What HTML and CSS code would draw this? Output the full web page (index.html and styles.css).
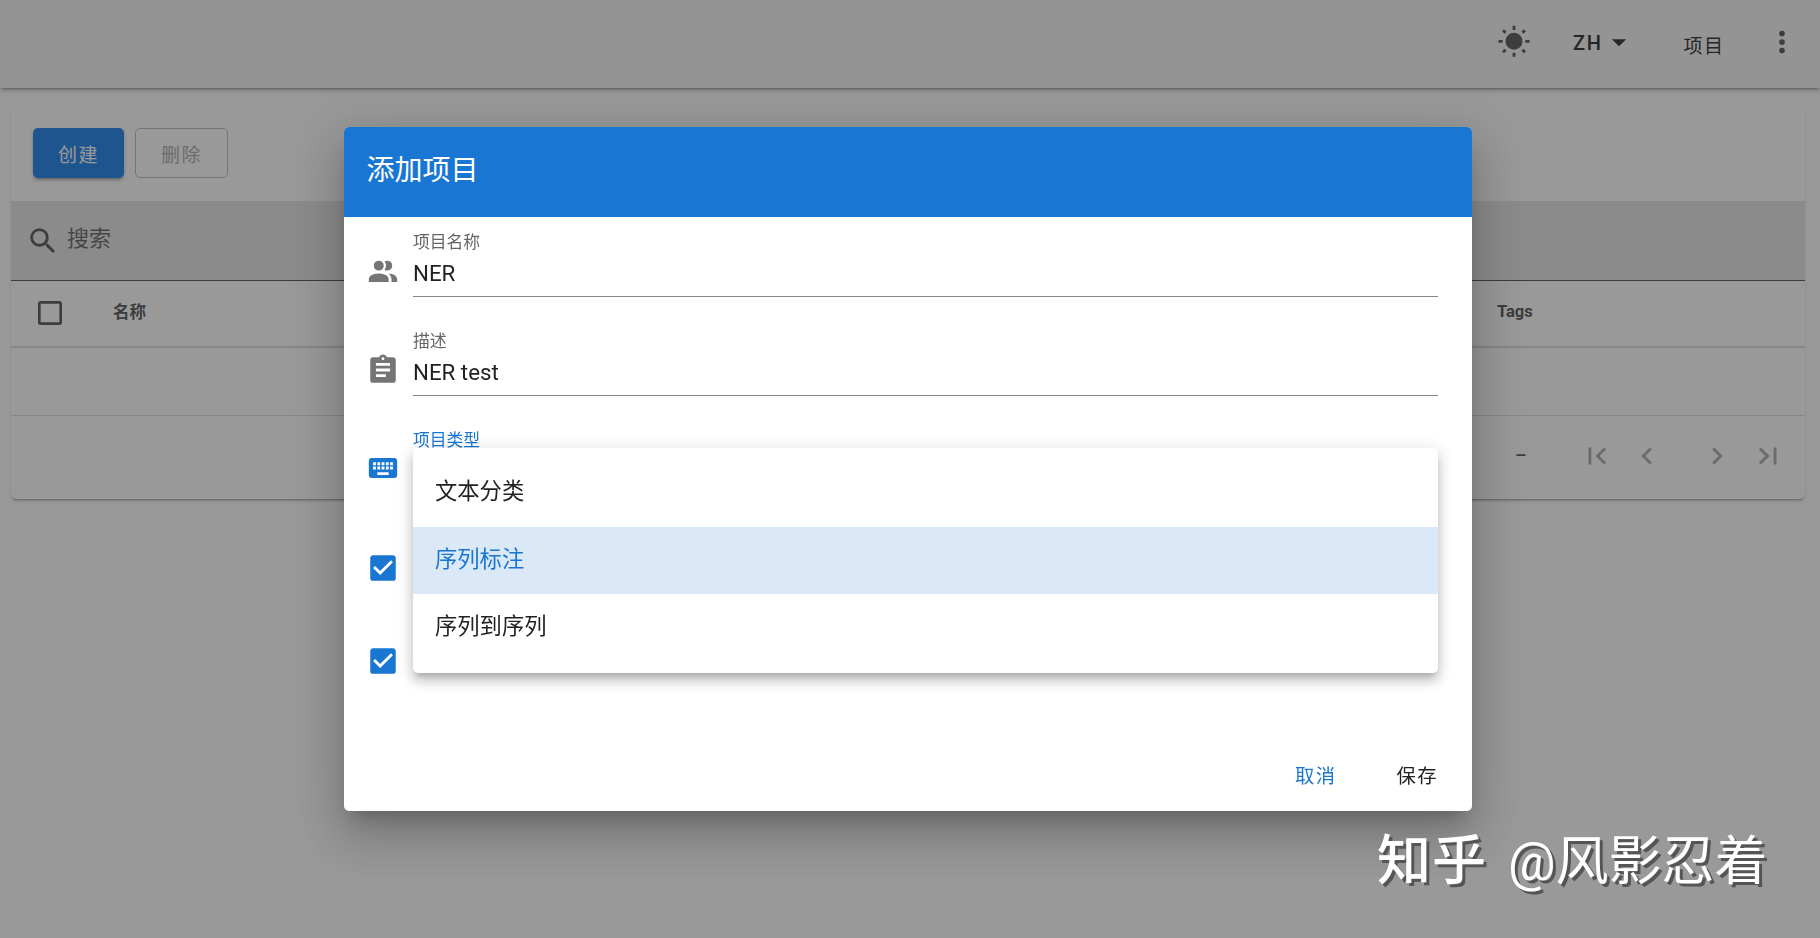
FILE: index.html
```html
<!DOCTYPE html>
<html lang="zh">
<head>
<meta charset="utf-8">
<title>项目</title>
<link rel="stylesheet" href="styles.css">
</head>
<body>
<div class="app">
  <header class="appbar">
    <svg class="icon sun" viewBox="0 0 24 24"><path d="M3.55,18.54L4.96,19.95L6.76,18.16L5.34,16.74M11,22.45C11.32,22.45 13,22.45 13,22.45V19.5H11M12,5.5A6,6 0 0,0 6,11.5A6,6 0 0,0 12,17.5A6,6 0 0,0 18,11.5C18,8.18 15.31,5.5 12,5.5M20,12.5H23V10.5H20M17.24,18.16L19.04,19.95L20.45,18.54L18.66,16.74M20.45,4.46L19.04,3.05L17.24,4.84L18.66,6.26M13,0.55H11V3.5H13M4,10.5H1V12.5H4M6.76,4.84L4.96,3.05L3.55,4.46L5.34,6.26L6.76,4.84Z"/></svg>
    <span class="lang">ZH</span>
    <svg class="icon caret" viewBox="0 0 24 24"><path d="M7,10L12,15L17,10H7Z"/></svg>
    <span class="nav-link">项目</span>
    <svg class="icon dots" viewBox="0 0 24 24"><path d="M12,16A2,2 0 0,1 14,18A2,2 0 0,1 12,20A2,2 0 0,1 10,18A2,2 0 0,1 12,16M12,10A2,2 0 0,1 14,12A2,2 0 0,1 12,14A2,2 0 0,1 10,12A2,2 0 0,1 12,10M12,4A2,2 0 0,1 14,6A2,2 0 0,1 12,8A2,2 0 0,1 10,6A2,2 0 0,1 12,4Z"/></svg>
  </header>
  <main class="main">
    <section class="card">
      <div class="toolbar">
        <button class="btn btn-primary">创建</button>
        <button class="btn btn-outline">删除</button>
      </div>
      <div class="search">
        <svg class="icon search-icon" viewBox="0 0 24 24"><path d="M9.5,3A6.5,6.5 0 0,1 16,9.5C16,11.11 15.41,12.59 14.44,13.73L14.71,14H15.5L20.5,19L19,20.5L14,15.5V14.71L13.73,14.44C12.59,15.41 11.11,16 9.5,16A6.5,6.5 0 0,1 3,9.5A6.5,6.5 0 0,1 9.5,3M9.5,5C7,5 5,7 5,9.5C5,12 7,14 9.5,14C12,14 14,12 14,9.5C14,7 12,5 9.5,5Z"/></svg>
        <span class="search-text">搜索</span>
      </div>
      <div class="thead">
        <svg class="icon head-check" viewBox="0 0 24 24"><path d="M19,3H5C3.89,3 3,3.89 3,5V19A2,2 0 0,0 5,21H19A2,2 0 0,0 21,19V5C21,3.89 20.1,3 19,3M19,5V19H5V5H19Z"/></svg>
        <span class="th th-name">名称</span>
        <span class="th th-tags">Tags</span>
      </div>
      <div class="empty-row"></div>
      <div class="pager">
        <span class="pager-range">–</span>
        <svg class="icon pager-icon first" viewBox="0 0 24 24"><path d="M18.41,16.59L13.82,12L18.41,7.41L17,6L11,12L17,18L18.41,16.59M6,6H8V18H6V6Z"/></svg>
        <svg class="icon pager-icon prev" viewBox="0 0 24 24"><path d="M15.41,16.58L10.83,12L15.41,7.41L14,6L8,12L14,18L15.41,16.58Z"/></svg>
        <svg class="icon pager-icon next" viewBox="0 0 24 24"><path d="M8.59,16.58L13.17,12L8.59,7.41L10,6L16,12L10,18L8.59,16.58Z"/></svg>
        <svg class="icon pager-icon last" viewBox="0 0 24 24"><path d="M5.59,7.41L10.18,12L5.59,16.59L7,18L13,12L7,6L5.59,7.41M16,6H18V18H16V6Z"/></svg>
      </div>
    </section>
  </main>
</div>

<div class="overlay">
  <div class="dialog">
    <div class="dialog-title">添加项目</div>
    <div class="dialog-body">
      <div class="field">
        <svg class="icon field-icon" viewBox="0 0 24 24"><path d="M16 17v2H2v-2s0-4 7-4 7 4 7 4m-3.5-9.5A3.5 3.5 0 1 0 9 11a3.5 3.5 0 0 0 3.5-3.5m3.44 5.5A5.32 5.32 0 0 1 18 17v2h4v-2s0-3.63-6.06-4M15 4a3.39 3.39 0 0 0-1.93.59 5 5 0 0 1 0 5.82A3.39 3.39 0 0 0 15 11a3.5 3.5 0 0 0 0-7z"/></svg>
        <div class="field-main">
          <div class="field-label">项目名称</div>
          <div class="field-value">NER</div>
        </div>
      </div>
      <div class="field">
        <svg class="icon field-icon clip" viewBox="0 0 24 24"><path d="M17,9H7V7H17M17,13H7V11H17M14,17H7V15H14M12,3A1,1 0 0,1 13,4A1,1 0 0,1 12,5A1,1 0 0,1 11,4A1,1 0 0,1 12,3M19,3H14.82C14.4,1.84 13.3,1 12,1C10.7,1 9.6,1.84 9.18,3H5A2,2 0 0,0 3,5V19A2,2 0 0,0 5,21H19A2,2 0 0,0 21,19V5C21,3.89 20.1,3 19,3Z"/></svg>
        <div class="field-main">
          <div class="field-label">描述</div>
          <div class="field-value">NER test</div>
        </div>
      </div>
      <div class="field field-select">
        <svg class="icon field-icon blue" viewBox="0 0 24 24"><path d="M19,10H17V8H19M19,13H17V11H19M16,10H14V8H16M16,13H14V11H16M16,17H8V15H16M7,10H5V8H7M7,13H5V11H7M8,11H10V13H8M8,8H10V10H8M11,11H13V13H11M11,8H13V10H11M20,5H4C2.89,5 2,5.89 2,7V17A2,2 0 0,0 4,19H20A2,2 0 0,0 22,17V7C22,5.89 21.1,5 20,5Z"/></svg>
        <div class="field-main">
          <div class="field-label blue-text">项目类型</div>
        </div>
      </div>
      <div class="checks">
        <svg class="icon check blue" viewBox="0 0 24 24"><path d="M10,17L5,12L6.41,10.58L10,14.17L17.59,6.58L19,8M19,3H5C3.89,3 3,3.89 3,5V19A2,2 0 0,0 5,21H19A2,2 0 0,0 21,19V5C21,3.89 20.1,3 19,3Z"/></svg>
        <svg class="icon check blue" viewBox="0 0 24 24"><path d="M10,17L5,12L6.41,10.58L10,14.17L17.59,6.58L19,8M19,3H5C3.89,3 3,3.89 3,5V19A2,2 0 0,0 5,21H19A2,2 0 0,0 21,19V5C21,3.89 20.1,3 19,3Z"/></svg>
      </div>
    </div>
    <div class="dialog-actions">
      <span class="action blue-text">取消</span>
      <span class="action">保存</span>
    </div>
    <ul class="menu">
      <li class="menu-item">文本分类</li>
      <li class="menu-item selected">序列标注</li>
      <li class="menu-item">序列到序列</li>
    </ul>
  </div>
  <div class="watermark"><span class="wm-brand">知乎</span><span class="wm-name">@风影忍着</span></div>
</div>
</body>
</html>
```
FILE: styles.css
```css
* { box-sizing: border-box; }
html, body { margin: 0; height: 100%; overflow: hidden; }
body {
  background: #fff;
  color: #222;
  font-family: Roboto, "Noto Sans CJK SC", sans-serif;
  width: 1820px;
  height: 938px;
}
.icon { display: block; fill: currentColor; flex: none; }

.appbar {
  height: 88px;
  background: #f5f5f5;
  box-shadow: 0 3px 2px -2px rgba(0,0,0,.3), 0 3px 5px rgba(0,0,0,.2);
  display: flex;
  align-items: center;
  color: #2b2b2b;
  padding-left: 1497px;
}
.sun { width: 34px; height: 34px; color: #555; margin-top: -4px; }
.lang { margin-left: 42px; font-size: 20px; font-weight: 500; letter-spacing: 1.6px; margin-top: -2px; }
.caret { width: 34px; height: 34px; margin-left: 0; margin-top: -4px; }
.nav-link { margin-left: 47px; font-size: 19px; letter-spacing: 1.6px; }
.dots { width: 34px; height: 34px; color: #555; margin-left: 40px; margin-top: -4px; }

.main { padding: 18px 15px 0 11px; }
.card {
  background: #fff;
  border-radius: 5px;
  box-shadow: 0 3px 2px -2px rgba(0,0,0,.3), 0 2px 3px rgba(0,0,0,.15);
  height: 393px;
}
.toolbar { height: 95px; padding: 22px 0 0 22px; display: flex; gap: 11px; align-items: flex-start; }
.btn {
  height: 50px;
  border-radius: 5px;
  font: 400 19px Roboto, "Noto Sans CJK SC", sans-serif;
  letter-spacing: 1.5px;
  padding: 0;
}
.btn-primary {
  width: 91px;
  background: #1e82ec;
  color: #fff;
  border: 0;
  box-shadow: 0 3px 3px -2px rgba(0,0,0,.3), 0 2px 4px rgba(0,0,0,.2);
}
.btn-outline { width: 93px; background: none; border: 1px solid #bbb; color: #aaa; }
.search {
  height: 80px;
  background: #e6e6e6;
  border-bottom: 1px solid #555;
  display: flex;
  align-items: center;
  padding-left: 15px;
  color: #555;
}
.search-icon { width: 34px; height: 34px; }
.search-text { margin-left: 7px; font-size: 22px; margin-top: -9px; color: #666; }
.thead {
  height: 67px;
  border-bottom: 2px solid #ddd;
  display: flex;
  align-items: center;
  padding-left: 23px;
  padding-bottom: 2px;
  color: #555;
}
.head-check { width: 32px; height: 32px; color: #555; }
.th { font-size: 16.5px; font-weight: 700; margin-top: -3px; }
.th-name { margin-left: 47px; }
.th-tags { margin-left: 1351px; }
.empty-row { height: 68px; border-bottom: 1px solid #ddd; }
.pager { height: 81px; display: flex; align-items: center; color: #aaa; padding-left: 1504px; padding-bottom: 2px; }
.pager-range { color: #555; width: 18px; font-size: 18px; font-weight: 500; }
.pager-icon { width: 34px; height: 34px; }
.first { margin-left: 47px; }
.prev { margin-left: 16px; }
.next { margin-left: 36px; }
.last { margin-left: 17px; }

.overlay {
  position: fixed;
  inset: 0;
  background: rgba(33,33,33,.46);
  padding: 127px 0 0 344px;
}
.dialog {
  position: relative;
  width: 1128px;
  height: 684px;
  background: #fff;
  border-radius: 5px;
  display: flex;
  flex-direction: column;
  box-shadow: 0 13px 17px -8px rgba(0,0,0,.2), 0 28px 44px 3px rgba(0,0,0,.14), 0 10px 53px 9px rgba(0,0,0,.12);
}
.dialog-title {
  height: 90px;
  background: #1976d2;
  color: #fff;
  font-size: 28px;
  line-height: 88px;
  padding-left: 22.5px;
  border-radius: 5px 5px 0 0;
  flex: none;
}
.dialog-body { padding: 15px 34px 0 22px; flex: none; }
.field { display: flex; height: 99px; }
.field-icon { width: 34px; height: 34px; color: #757575; margin-top: 23px; margin-right: 13px; }
.field-icon.clip { margin-top: 22px; }
.field-icon.blue { color: #1976d2; margin-top: 21px; }
.field-main { flex: 1; }
.field-label { font-size: 16.8px; line-height: 20px; height: 21px; color: #666; }
.field-value {
  font-size: 22.3px;
  line-height: 40px;
  height: 44px;
  border-bottom: 1px solid #888;
  color: #222;
}
.blue-text { color: #1976d2; }
.blue { color: #1976d2; }
.checks { display: flex; flex-direction: column; gap: 59px; padding-top: 22px; }
.check { width: 34px; height: 34px; }
.dialog-actions {
  margin-top: auto;
  height: 72px;
  flex: none;
  display: flex;
  justify-content: flex-end;
  align-items: center;
  gap: 60px;
  padding-right: 34px;
}
.action { font-size: 19.3px; letter-spacing: 1.5px; }

.menu {
  position: absolute;
  left: 69px;
  top: 321px;
  width: 1025px;
  height: 225px;
  margin: 0;
  padding: 11px 0;
  list-style: none;
  background: #fff;
  border-radius: 5px;
  box-shadow: 0 6px 6px -4px rgba(0,0,0,.2), 0 9px 12px 1px rgba(0,0,0,.14), 0 3px 16px 2px rgba(0,0,0,.12);
}
.menu-item { height: 67.5px; line-height: 65px; padding-left: 22px; font-size: 22.3px; color: #222; }
.menu-item.selected { background: #dbe8f7; color: #1976d2; }

.watermark {
  position: absolute;
  left: 1377px;
  top: 826px;
  display: flex;
  align-items: center;
  gap: 21px;
  line-height: 72px;
  color: #fff;
  white-space: nowrap;
  text-shadow: 3px 3px 0 #555;
}
.wm-brand { font-size: 54px; font-weight: 500; letter-spacing: 1px; }
.wm-name { font-size: 53px; font-weight: 400; }
```
